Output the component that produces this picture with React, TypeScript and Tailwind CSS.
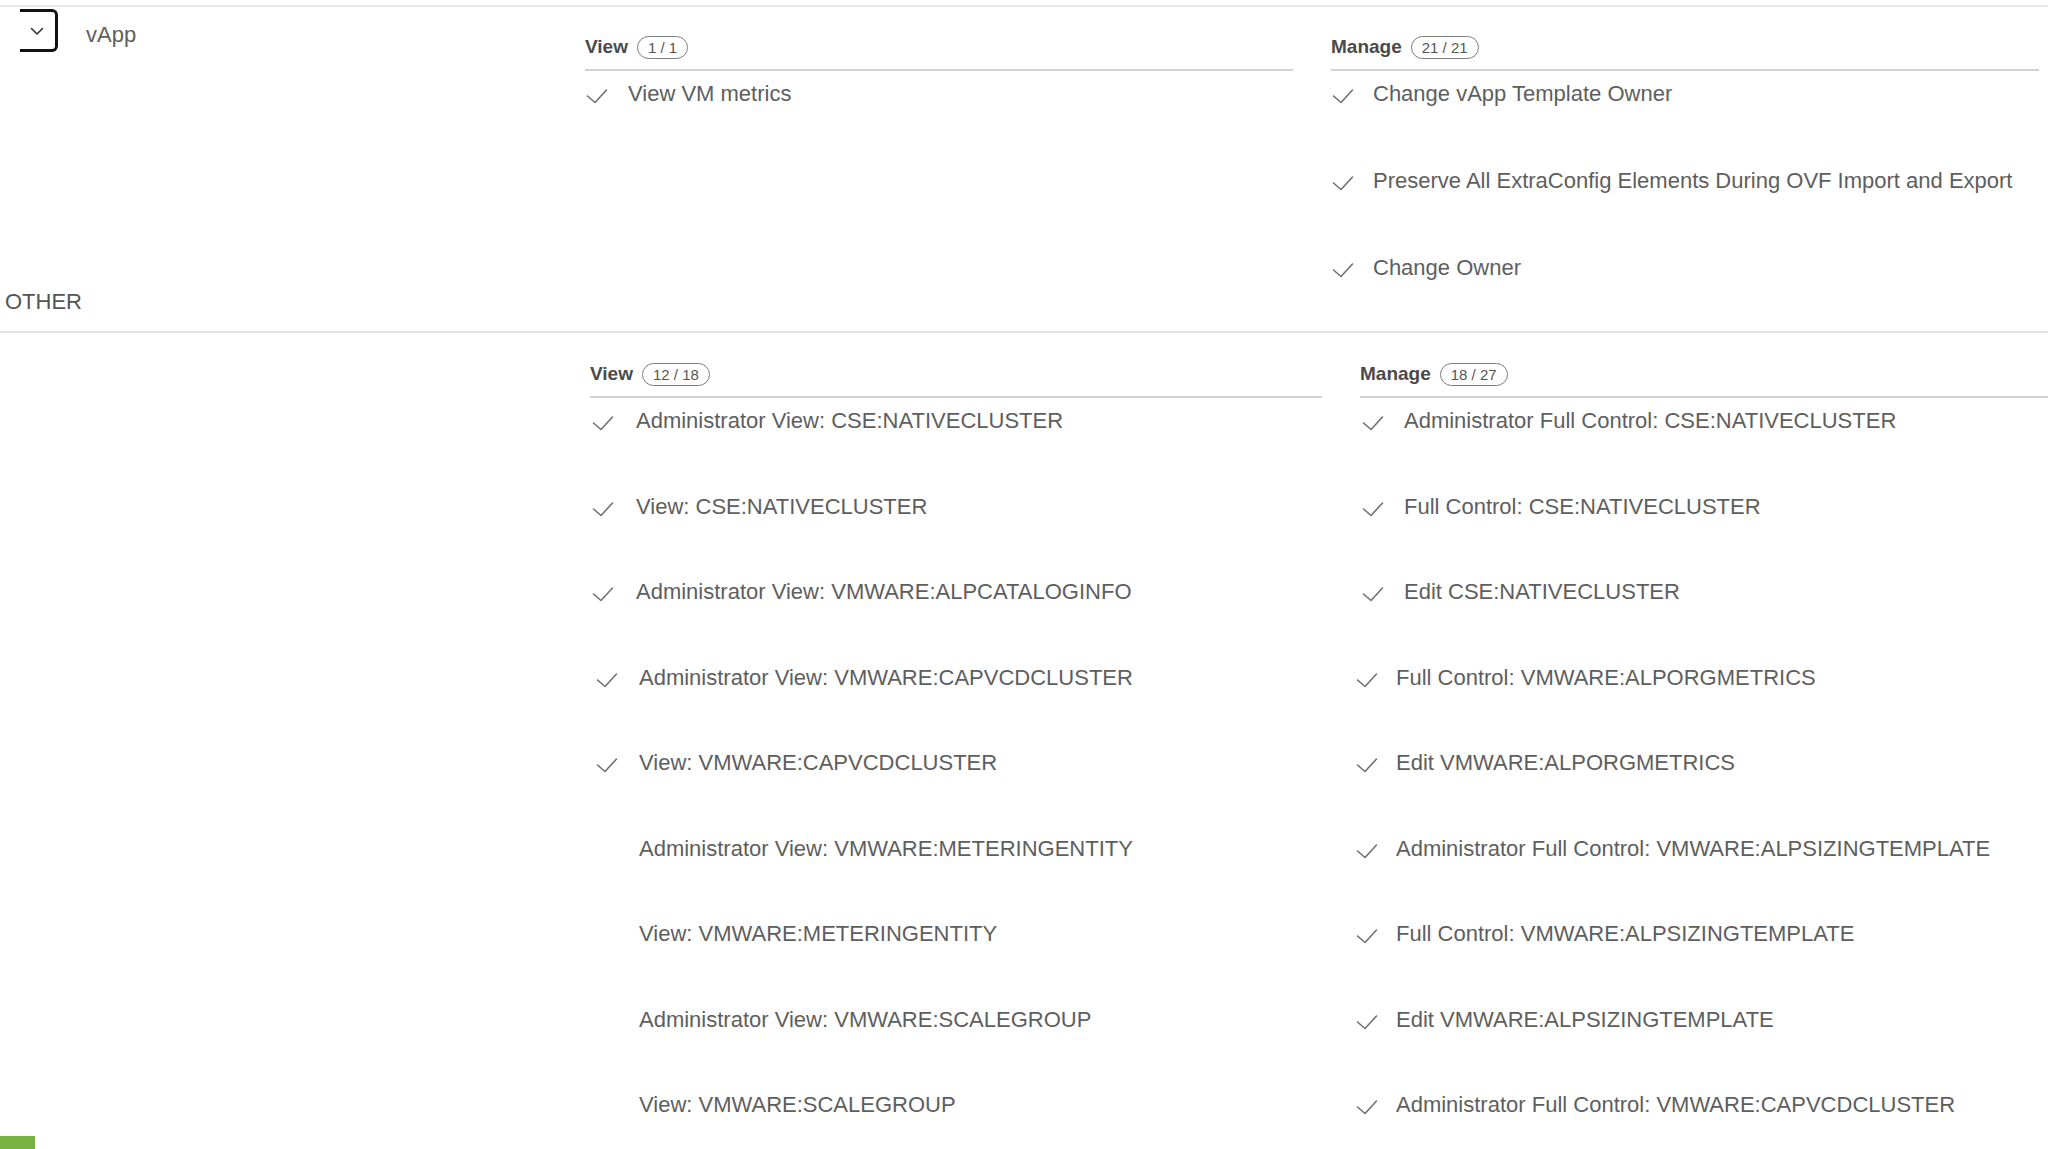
import React from 'react';

interface PermRow {
  label: string;
  checked: boolean;
  shifted?: boolean;
}

const vappView: PermRow[] = [{ label: 'View VM metrics', checked: true }];

const vappManage: PermRow[] = [
  { label: 'Change vApp Template Owner', checked: true },
  { label: 'Preserve All ExtraConfig Elements During OVF Import and Export', checked: true },
  { label: 'Change Owner', checked: true },
];

const otherView: PermRow[] = [
  { label: 'Administrator View: CSE:NATIVECLUSTER', checked: true },
  { label: 'View: CSE:NATIVECLUSTER', checked: true },
  { label: 'Administrator View: VMWARE:ALPCATALOGINFO', checked: true },
  { label: 'Administrator View: VMWARE:CAPVCDCLUSTER', checked: true, shifted: true },
  { label: 'View: VMWARE:CAPVCDCLUSTER', checked: true, shifted: true },
  { label: 'Administrator View: VMWARE:METERINGENTITY', checked: false, shifted: true },
  { label: 'View: VMWARE:METERINGENTITY', checked: false, shifted: true },
  { label: 'Administrator View: VMWARE:SCALEGROUP', checked: false, shifted: true },
  { label: 'View: VMWARE:SCALEGROUP', checked: false, shifted: true },
];

const otherManage: PermRow[] = [
  { label: 'Administrator Full Control: CSE:NATIVECLUSTER', checked: true },
  { label: 'Full Control: CSE:NATIVECLUSTER', checked: true },
  { label: 'Edit CSE:NATIVECLUSTER', checked: true },
  { label: 'Full Control: VMWARE:ALPORGMETRICS', checked: true, shifted: true },
  { label: 'Edit VMWARE:ALPORGMETRICS', checked: true, shifted: true },
  { label: 'Administrator Full Control: VMWARE:ALPSIZINGTEMPLATE', checked: true, shifted: true },
  { label: 'Full Control: VMWARE:ALPSIZINGTEMPLATE', checked: true, shifted: true },
  { label: 'Edit VMWARE:ALPSIZINGTEMPLATE', checked: true, shifted: true },
  { label: 'Administrator Full Control: VMWARE:CAPVCDCLUSTER', checked: true, shifted: true },
];

const CheckMark = () => (
  <svg width="22" height="16" viewBox="0 0 22 16" fill="none" className="mt-[4px] shrink-0">
    <polyline points="1.5,8 9,14.5 20.5,2" stroke="#707070" strokeWidth="1.6" strokeLinecap="round" strokeLinejoin="round" />
  </svg>
);

const Badge = ({ text }: { text: string }) => (
  <span className="ml-[9px] inline-flex h-[23px] items-center rounded-full border-[1.5px] border-[#7d7d7d] px-[10px] text-[15px] leading-none text-[#555]">
    {text}
  </span>
);

// header + underline for a permission column
const ColumnHeader = ({ title, count, top }: { title: string; count: string; top: string }) => (
  <div className={`${top} border-b-2 border-[#d2d2d2] pb-[7px]`}>
    <div className="flex h-[30px] items-center">
      <span className="text-[19px] font-bold text-[#4a4a4a]">{title}</span>
      <Badge text={count} />
    </div>
  </div>
);

const Row = ({ row, pad, box }: { row: PermRow; pad: string; box: string }) => (
  <div className={`flex items-center ${pad}`}>
    <div className={`flex ${box}`}>{row.checked && <CheckMark />}</div>
    <span className="whitespace-nowrap text-[22px] leading-[26px] text-[#5e5e5e]">{row.label}</span>
  </div>
);

export default function App() {
  return (
    <div
      className="relative h-[1149px] w-full overflow-hidden bg-white"
      style={{ fontFamily: '"Liberation Sans", Arial, sans-serif' }}
    >
      <div className="mt-[5px] h-[2px] w-full bg-[#e9e9e9]" />

      {/* vApp section */}
      <div className="flex h-[281px]">
        <div className="flex w-[585px] shrink-0 items-start">
          <div className="ml-[20px] mt-[2px] flex h-[43px] w-[38px] items-center justify-center rounded-r-[6px] border-b-[3px] border-r-[3px] border-t-[3px] border-[#111]">
            <svg width="14" height="9" viewBox="0 0 14 9" fill="none" className="mr-[2px] mt-[2px]">
              <polyline points="1.5,1.5 7,7 12.5,1.5" stroke="#333" strokeWidth="1.6" strokeLinecap="round" strokeLinejoin="round" />
            </svg>
          </div>
          <span className="ml-[28px] mt-[15px] text-[22px] leading-[26px] text-[#5e5e5e]">vApp</span>
        </div>

        <div className="w-[708px] shrink-0">
          <ColumnHeader title="View" count="1 / 1" top="pt-[25px]" />
          <div className="flex flex-col gap-[61px] pt-[10px]">
            {vappView.map((r) => (
              <Row key={r.label} row={r} pad="pl-[1px]" box="w-[42px]" />
            ))}
          </div>
        </div>

        <div className="w-[38px] shrink-0" />

        <div className="w-[708px] shrink-0">
          <ColumnHeader title="Manage" count="21 / 21" top="pt-[25px]" />
          <div className="flex flex-col gap-[61px] pt-[10px]">
            {vappManage.map((r) => (
              <Row key={r.label} row={r} pad="pl-[1px]" box="w-[41px]" />
            ))}
          </div>
        </div>
      </div>

      {/* OTHER category */}
      <div className="h-[43px] pl-[5px] pt-[1px]">
        <span className="text-[22px] leading-[26px] text-[#555]">OTHER</span>
      </div>
      <div className="h-[2px] w-full bg-[#e4e4e4]" />

      <div className="flex">
        <div className="w-[590px] shrink-0" />

        <div className="w-[732px] shrink-0">
          <ColumnHeader title="View" count="12 / 18" top="pt-[26px]" />
          <div className="flex flex-col gap-[59.5px] pt-[10px]">
            {otherView.map((r) =>
              r.shifted ? (
                <Row key={r.label} row={r} pad="pl-[6px]" box="w-[43px]" />
              ) : (
                <Row key={r.label} row={r} pad="pl-[2px]" box="w-[44px]" />
              )
            )}
          </div>
        </div>

        <div className="w-[38px] shrink-0" />

        <div className="flex-1">
          <ColumnHeader title="Manage" count="18 / 27" top="pt-[26px]" />
          <div className="flex flex-col gap-[59.5px] pt-[10px]">
            {otherManage.map((r) =>
              r.shifted ? (
                <Row key={r.label} row={r} pad="-ml-[4px]" box="w-[40px]" />
              ) : (
                <Row key={r.label} row={r} pad="pl-[2px]" box="w-[42px]" />
              )
            )}
          </div>
        </div>
      </div>

      <div className="absolute bottom-0 left-0 h-[13px] w-[35px] bg-[#7ab342]" />
    </div>
  );
}
